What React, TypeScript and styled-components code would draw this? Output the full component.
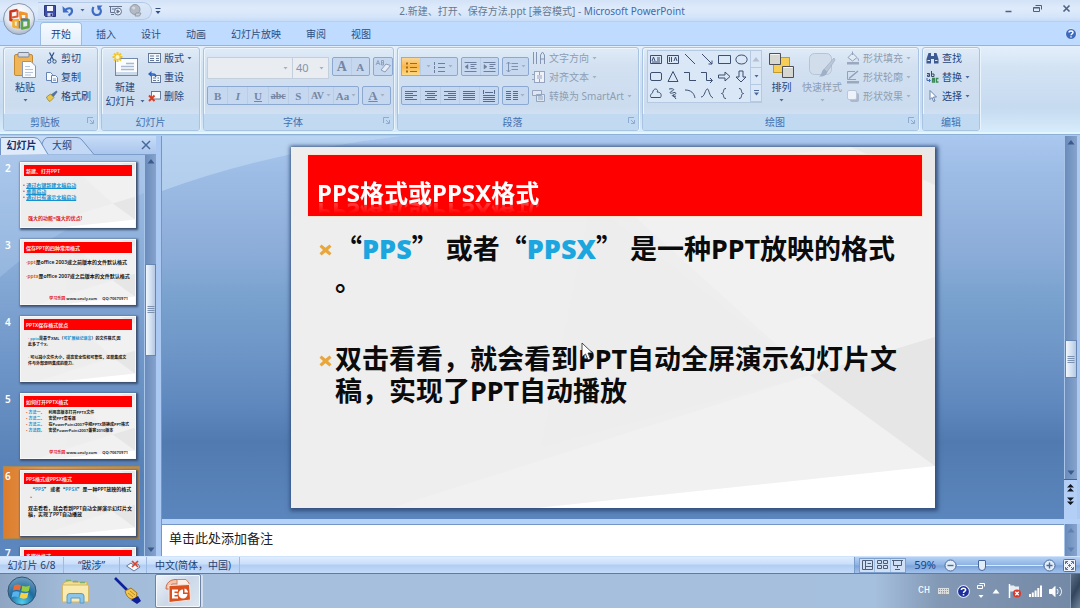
import React from 'react';
import styled, { createGlobalStyle, css } from 'styled-components';

const UI = '"Noto Sans", "Noto Sans CJK SC", sans-serif';

const Global = createGlobalStyle`
  *, *::before, *::after { box-sizing: border-box; }
  html, body { margin: 0; padding: 0; height: 100%; }
  #root { height: 100%; }
  body { font-family: ${UI}; font-size: 10px; line-height: 14px; color: #24406f; overflow: hidden; }
  button, select, textarea, input { font: inherit; color: inherit; margin: 0; padding: 0; border: 0; background: none; }
  svg { display: block; flex: none; }
  ul, ol, p, h1, h2 { margin: 0; padding: 0; list-style: none; font: inherit; }
`;

/* ---------- shell ---------- */
const Shell = styled.div`
  position: relative; display: flex; flex-direction: column; height: 100vh; background: #bfdbff;
`;

const TitleBar = styled.header`
  display: grid; grid-template-columns: 1fr auto 1fr; align-items: center; height: 22px; flex: none; padding-left: 4px;
  background: linear-gradient(#d3e2f7, #dfebfb 40%, #d5e5fa 80%, #c7dcf8); border-bottom: 1px solid #b7d0f0;
`;
const QuickArea = styled.div`
  display: flex; align-items: center; padding-left: 34px;
`;
const QuickBar = styled.div`
  display: flex; align-items: center; gap: 6px; height: 18px; width: 114px; padding-left: 6px;
  border: 1px solid #b4c9e6; border-left: 0; border-radius: 0 9px 9px 0; background: linear-gradient(#dbe8f9, #cfdff4);
`;
const IconButton = styled.button`
  display: flex; align-items: center; justify-content: center; flex: none;
`;
const TitleText = styled.h1`
  text-align: center; font-size: 10px; color: #67788f; white-space: nowrap;
  span { color: #3c6cb0; }
`;
const WindowButtons = styled.div`
  display: flex; justify-content: flex-end; gap: 20px; padding-right: 9px; align-items: center; padding-bottom: 4px;
`;
const OfficeButton = styled.button`
  position: absolute; left: 2px; top: 2px; width: 34px; height: 34px; z-index: 2;
`;

const TabRow = styled.nav`
  display: flex; align-items: flex-end; gap: 5px; height: 23px; flex: none; padding: 0 3px 0 41px; background: #bfdbff;
`;
const Tab = styled.button<{ $active?: boolean }>`
  height: 22px; padding: 0 10px; border-radius: 3px 3px 0 0; white-space: nowrap; color: #2c4d80;
  ${p => p.$active && css`
    background: linear-gradient(#f6fafe, #e3eefb); box-shadow: 0 0 0 1px #9cbce2; color: #1f3f78;
  `}
`;
const HelpButton = styled(IconButton)`
  margin-left: auto; height: 22px;
`;

const Ribbon = styled.div`
  display: flex; align-items: stretch; gap: 3px; flex: none; height: 90px; padding: 1px 3px 3px; position: relative; z-index: 1;
  background: linear-gradient(#e4effb, #d3e3f4 25%, #c6daf0 70%, #d8edfc); 
  border-top: 1px solid #92b4dd; border-bottom: 1px solid #8fb0d6; box-shadow: inset 0 -2px 0 #e2f6fd;
`;
const GroupBox = styled.section<{ $w: number }>`
  display: flex; flex-direction: column; flex: none; width: ${p => p.$w}px; 
  border: 1px solid #a9c3e2; border-radius: 3px; box-shadow: inset 1px 1px 0 #eef6fd, 1px 0 0 #eaf4fd;
  background: linear-gradient(#e0ebf7, #d3e1f1 20%, #cbdcef 70%, #dbe9f6); overflow: hidden;
`;
const GroupBody = styled.div`
  display: flex; flex: 1; padding: 1px 3px 0; gap: 3px;
`;
const GroupLabel = styled.h2`
  display: flex; align-items: center; height: 16px; background: #c1d9f1; color: #4170b0;
  span { flex: 1; text-align: center; }
`;
const Big = styled.button<{ $w: number; $off?: boolean }>`
  display: flex; flex-direction: column; align-items: center; justify-content: flex-start; width: ${p => p.$w}px; flex: none; padding-top: 2px;
  color: ${p => (p.$off ? '#8d9db3' : '#24457d')};
  span { line-height: 14px; white-space: nowrap; display: flex; align-items: center; gap: 4px; }
  > svg:first-child { margin-bottom: 1px; }
  > svg:last-child { margin-top: 5px; }
`;
const Stack = styled.div`
  display: flex; flex-direction: column; gap: 1px; flex: none;
`;
const Small = styled.button<{ $off?: boolean }>`
  display: flex; align-items: center; gap: 3px; height: 18px; white-space: nowrap;
  color: ${p => (p.$off ? '#8d9db3' : '#24457d')};
`;
const Rows = styled.div`
  display: flex; flex-direction: column; gap: 10px; padding-top: 8px; flex: none;
`;
const Line = styled.div`
  display: flex; gap: 3px; height: 19px;
`;
const Cluster = styled.div<{ $w: number }>`
  display: flex; width: ${p => p.$w}px; border: 1px solid #8ba8d0; border-radius: 2px; background: #c6d8ef;
`;
const Tool = styled.button<{ $on?: boolean; $grow?: number }>`
  display: flex; align-items: center; justify-content: center; gap: 2px; flex: ${p => p.$grow ?? 1} 1 0; min-width: 0; color: #7586a4; 
  & + & { border-left: 1px solid #b9cde7; }
  ${p => p.$on && css`background: linear-gradient(#fcd596, #f9b64a 50%, #fdd987); box-shadow: 0 0 0 1px #d6a254;`}
`;
const Letter = styled.span<{ $size?: number }>`
  font-family: "Liberation Serif", serif; font-size: ${p => p.$size ?? 11}px; line-height: 14px; font-weight: 700;
`;
const Combo = styled.label<{ $w: number }>`
  display: flex; align-items: center; width: ${p => p.$w}px; height: 22px; padding-right: 4px;
  border: 1px solid #c3cfdd; background: #e9edf2; color: #8494ab;
  select { appearance: none; flex: 1; min-width: 0; padding-left: 3px; font-size: 11px; outline: 0; }
  & + & { margin-left: -4px; }
`;
const Gallery = styled.div`
  display: flex; height: 53px; border: 1px solid #b5c9e3; background: #dae7f6; margin: 1px 0 0 1px;
`;
const Shapes = styled.div`
  display: grid; grid-template-columns: repeat(6, 17px); grid-auto-rows: 17px;
`;
const GalleryScroll = styled.div`
  display: flex; flex-direction: column; width: 11px; border-left: 1px solid #b5c9e3;
  button { flex: 1; display: flex; align-items: center; justify-content: center; width: 100%; border-bottom: 1px solid #b5c9e3; }
`;

/* ---------- workspace ---------- */
const Workspace = styled.div`
  display: flex; flex: 1; min-height: 0; background: #abc9f3; padding-top: 1px;
`;
const SidePane = styled.aside`
  display: flex; flex-direction: column; width: 156px; flex: none; min-height: 0;
`;
const PaneTabs = styled.div`
  position: relative; display: flex; align-items: center; height: 19px; flex: none; padding-right: 5px;
  background: linear-gradient(#c7dcf7, #aac6ec); border-bottom: 1px solid #7d9ecb;
`;
const PaneTab = styled.button<{ $active?: boolean }>`
  height: 18px; width: ${p => (p.$active ? 43 : 38)}px; color: #27487f; z-index: 1; white-space: nowrap;
  ${p => p.$active && css`color: #14306a; font-weight: 700;`}
`;
const TabEdges = styled.svg`
  position: absolute; left: 0; top: 0;
`;
const PaneClose = styled(IconButton)`margin-left: auto;`;
const PaneBody = styled.div`
  display: flex; flex: 1; min-height: 0;
`;
const ThumbList = styled.ol`
  position: relative; flex: 1; overflow: hidden; padding-top: 3px;
  background: linear-gradient(#a2c0e7, #8baed9 25%, #7097c9 50%, #5680b6 80%, #5c87bf);
`;
const Swoosh = styled.svg`position: absolute; left: 0; top: 0;`;
const ThumbItem = styled.li<{ $on?: boolean }>`
  position: relative; display: flex; height: 73px; margin: 0 4px 4px 3px; padding: 3px 0 0 1px; border: 1px solid transparent;
  ${p => p.$on && css`background: linear-gradient(90deg, #dc7c2c, #e69a53 30%, #bd8a4b); border-color: #a98852;`}
`;
const ThumbNumber = styled.span`
  width: 15px; text-align: left; color: #fff; font-size: 10px; line-height: 12px; font-weight: 600;
`;
const ThumbSlide = styled.button`
  position: relative; display: flex; flex-direction: column; align-items: stretch; justify-content: flex-start;
  width: 116px; height: 66px; text-align: left; background: #eee; overflow: hidden;
  border: 1px solid #f8f8f8; box-shadow: 1px 1px 2px 1px #3b4f6e; color: #111; font-size: 5px; line-height: 6px; font-weight: 600;
`;
const Facets = styled.svg`position: absolute; inset: 0; width: 100%; height: 100%;`;
const ThumbTitle = styled.span`
  position: relative; flex: none; height: 11px; margin: 2px 3px 0 3px; padding: 2px 2px 0; background: #f00; color: #ffe9e9; 
  font-size: 5px; line-height: 8px; white-space: nowrap;
`;
const ThumbText = styled.span<{ $top: number; $size?: number; $indent?: number }>`
  position: relative; margin: ${p => p.$top}px 0 0 ${p => p.$indent ?? 5}px; white-space: nowrap; font-size: ${p => p.$size ?? 5}px;
  line-height: 6px;
  i { font-style: normal; color: #d9531e; } b { font-weight: inherit; color: #1591cf; } em { font-style: normal; color: #e01414; }
`;
const ThumbFoot = styled.span`
  position: absolute; right: 7px; bottom: 2px; font-size: 4px; line-height: 6px; white-space: pre;
  em { font-style: normal; color: #e01414; }
`;
const Scroll = styled.div<{ $w: number; $fill?: boolean }>`
  display: flex; flex-direction: column; align-items: center; width: ${p => p.$w}px; flex: ${p => (p.$fill ? '1' : 'none')};
  background: linear-gradient(90deg, #6a8bbb, #86a3cb); border-left: 1px solid #a9c5ea; padding: 4px 0;
`;
const ScrollThumb = styled.div<{ $h: number }>`
  width: 100%; flex: 0 0 ${p => p.$h}px; border: 1px solid #6585b3; background: linear-gradient(90deg, #f0f6fc, #d4e1f1 50%, #b5c9e2);
  display: flex; align-items: center; justify-content: center;
`;
const Spring = styled.div<{ $n: number }>`flex: ${p => p.$n} 1 0;`;

const Main = styled.main`
  display: flex; flex-direction: column; flex: 1; min-width: 0; margin-left: 5px; border-left: 1px solid #7496c4;
`;
const StageRow = styled.div`
  display: flex; flex: 1; min-height: 0;
`;
const Stage = styled.div`
  position: relative; flex: 1; display: flex; align-items: center; justify-content: center; min-width: 0;
  background: linear-gradient(#a9c7ef, #9dbce5 10%, #8dadd9 30%, #7ba3cf 41%, #6c94c6 58%, #5f88be 70%, #517bb0 80%, #5b86bd 100%);
`;
const Slide = styled.article`
  position: relative; width: 644px; max-width: 100%; height: 361px; background: #eee; box-shadow: 1px 1px 4px 2px #33507d;
  padding: 8px 13px 0 17px; font-weight: 700; color: #0b0b0b;
`;
const SlideTitle = styled.h1`
  position: relative; display: flex; align-items: flex-end; height: 61px; padding: 0 9px 8px; background: #f00; color: #fff;
  box-shadow: 0 0 0 1px #fbe3cd; font-weight: 700; font-size: 24px; line-height: 30px; white-space: nowrap;
  span { -webkit-box-reflect: below -11px linear-gradient(transparent 45%, rgba(255, 255, 255, 0.4)); }
`;
const Points = styled.ul`
  position: relative; display: flex; flex-direction: column; gap: 46px; padding: 16px 0 0 11px; font-size: 27px; line-height: 32px;
  li { display: grid; grid-template-columns: 16px 1fr; white-space: nowrap; font-weight: 700; }
  svg { margin-top: 12px; }
  b { color: #1ba6df; }
`;
const Quote = styled.span`font-family: "Noto Sans CJK SC", sans-serif;`;
const Pointer = styled.svg`position: absolute; left: 45%; top: 54%;`;

const RightScroll = styled.div`
  display: flex; flex-direction: column; width: 16px; padding-right: 3px; background: #abc9f3;
`;
const PageButtons = styled.div`
  display: flex; flex-direction: column; align-items: center; justify-content: flex-start; gap: 5px; height: 40px; padding-top: 4px;
  border-top: 1px solid #47658f; background: #b3cff5;
`;
const NotesRow = styled.div`
  display: flex; height: 37px; flex: none; border-top: 5px solid #b4d1f8; padding-right: 3px; 
`;
const Notes = styled.textarea`
  flex: 1; resize: none; background: #fff; border-top: 1px solid #7496c4; padding: 4px 7px; color: #222; font-size: 13px; line-height: 18px; outline: 0; overflow: hidden;
`;

/* ---------- status bar ---------- */
const StatusBar = styled.footer`
  display: flex; align-items: stretch; height: 18px; flex: none; color: #24406f;
  background: linear-gradient(#e0edfd, #c9def9 45%, #b0cdf3 50%, #c4dbf8); border-top: 1px solid #cfe3fc; border-bottom: 1px solid #567db1;
`;
const StatusCell = styled.div<{ $w: number }>`
  display: flex; align-items: center; justify-content: center; width: ${p => p.$w}px; white-space: nowrap; 
  border-right: 1px solid #9dbbe2;
`;
const ZoomArea = styled.div`
  display: flex; align-items: center; margin-left: auto; padding: 0 4px; gap: 7px; border-left: 1px solid #7a9dcc;
  background: linear-gradient(#b6d1f5, #8db2e3 50%, #7ca4da 55%, #a2c2ec);
`;
const Views = styled.div`
  display: flex; width: 47px; height: 15px; border: 1px solid #7d9fce; background: #cfe0f6;
  button { flex: 1; display: flex; align-items: center; justify-content: center; }
  button + button { border-left: 1px solid #9fbce2; }
`;
const ZoomLabel = styled.output`width: 24px; text-align: center; font-size: 11px; color: #1d4487;`;
const ZoomRange = styled.input`
  appearance: none; width: 86px; height: 14px; background: linear-gradient(#dceafb, #dceafb) center / 100% 1px no-repeat; outline: 0;
  &&& { margin: 0 -7px; }
  &::-webkit-slider-thumb {
    appearance: none; width: 8px; height: 11px; border: 1px solid #44669a; border-radius: 1px 1px 4px 4px; background: #e3edf9;
  }
`;

/* ---------- taskbar ---------- */
const Taskbar = styled.div`
  display: flex; align-items: stretch; height: 34px; flex: none; padding-left: 7px;
  background: linear-gradient(90deg, #8ea6c4, #a0bad8 6%, #a5bfdc 22%, #a5c0de 81%, #8298b4 87%, #7388a5);
`;
const TaskButton = styled.button<{ $active?: boolean; $w: number }>`
  display: flex; align-items: center; justify-content: center; width: ${p => p.$w}px; 
  ${p => p.$active && css`
    margin-left: 12px;
    border: 1px solid #6d83a3; border-radius: 2px; background: linear-gradient(135deg, #f0f4fa, #ccd8e8 50%, #dde7f2); box-shadow: inset 0 0 0 1px #f4f8fc, 3px 0 0 -1px #d2deed;
  `}
`;
const Tray = styled.div`
  display: flex; align-items: center; margin-left: auto; gap: 7px; color: #fff;
  span { font-family: "Liberation Mono", monospace; font-size: 10px; }
`;
const ShowDesktop = styled.button`
  width: 10px; height: 34px; background: linear-gradient(120deg, #5c7089, #32455c 50%, #71859f); border-left: 1px solid #8fa2bc;
`;

/* ---------- drawings ---------- */
const Caret = ({ c = '#4b6a9b' }: { c?: string }) => (
  <svg width="5" height="3" viewBox="0 0 5 3"><path d="M0.5 0H4.5L2.5 2.5Z" fill={c} /></svg>
);
const dim = '#a3b1c5';
const Launcher = () => (
  <svg width="11" height="16" viewBox="0 0 11 16" fill="none" stroke="#8fabd1">
    <path d="M1.5 9V3.5H7M4 6L7 9M7.5 6V9.5H4" />
  </svg>
);

const OfficeLogo = () => (
  <svg width="34" height="34" viewBox="0 0 34 34">
    <defs>
      <radialGradient id="orb" cx=".5" cy=".3" r=".75"><stop offset="0" stopColor="#fff" /><stop offset=".6" stopColor="#e4e9f0" /><stop offset="1" stopColor="#9babc2" /></radialGradient>
    </defs>
    <circle cx="17" cy="17" r="15.5" fill="url(#orb)" stroke="#8497b3" />
    <g fill="none" strokeWidth="2.6" strokeLinejoin="round">
      <path d="M15.500 8L8.500 9.500V18L11 18.500" stroke="#c9351c" />
      <path d="M15.500 8V14.500L10 15.500" stroke="#e0582f" strokeWidth="2" />
      <path d="M18 10.500L24.500 12V17L19 17.500Z" stroke="#f0962c" />
      <path d="M11.500 18.500V24.500L16 25.500V18Z" stroke="#f2ae30" />
      <path d="M20 18.500L26.500 18V25L20 26.500Z" stroke="#5fa443" />
      <path d="M19 17.500H26" stroke="#3f78cb" strokeWidth="2" />
      <path d="M17.500 19V26.500" stroke="#4d7fd0" strokeWidth="1.500" />
    </g>
  </svg>
);
const SaveIcon = () => (
  <svg width="12" height="12" viewBox="0 0 12 12">
    <path d="M0.500 0.500H11.500V11.500H1.500L0.500 10.500Z" fill="#3f4fa8" stroke="#2a377f" /><rect x="3" y="1" width="6" height="5" fill="#f2f5fb" /><rect x="3.500" y="8" width="5" height="3.500" fill="#cfd6e6" /><rect x="6.500" y="8.500" width="1.500" height="2.500" fill="#2a377f" />
  </svg>
);
const UndoIcon = () => (
  <svg width="12" height="12" viewBox="0 0 12 12" fill="none" stroke="#3e6cc4" strokeWidth="2.200"><path d="M3 5C6 2.500 10 2.500 10 6C10 8.500 8 9.500 6.500 10.500" /><path d="M0.500 1L1 7.500H7Z" fill="#3e6cc4" stroke="none" /></svg>
);
const RedoIcon = () => (
  <svg width="12" height="12" viewBox="0 0 12 12" fill="none" stroke="#3e6cc4" strokeWidth="2.200"><path d="M2.500 2C0.500 5.500 2 10 6 10C10 10 11.200 5 8 2.800" /><path d="M6 0.500H11.500L7 5.500Z" fill="#3e6cc4" stroke="none" /></svg>
);
const ShowIcon = () => (
  <svg width="14" height="12" viewBox="0 0 14 12" fill="none" stroke="#64748f"><path d="M0 1.500H13M1.500 1.500V7.500H6M5 9.500H2M3 4H7" /><circle cx="9" cy="6.500" r="3.500" fill="#e6edf6" /><path d="M8 5L10.500 6.500L8 8Z" fill="#64748f" /></svg>
);
const GlobeIcon = () => (
  <svg width="14" height="13" viewBox="0 0 14 13"><circle cx="6" cy="5.500" r="5" fill="#b3bac4" stroke="#949ca8" /><path d="M3 3C5 1.500 7 3 6 5C4 6 3 5 3 3Z" fill="#d5dae1" /><path d="M7 9H12L10.500 12H6Z" fill="#c8ced8" stroke="#949ca8" /></svg>
);
const HelpIcon = ({ s = 12, c = '#3b6bc0' }: { s?: number; c?: string }) => (
  <svg width={s} height={s} viewBox="0 0 12 12"><circle cx="6" cy="6" r="5.500" fill={c} stroke="#dfe8f6" /><path d="M4 4.600C4 2.400 8 2.400 8 4.600C8 6 6 5.800 6 7.300M6 8.300V9.600" fill="none" stroke="#fff" strokeWidth="1.400" /></svg>
);
const PasteIcon = () => (
  <svg width="24" height="28" viewBox="0 0 24 28">
    <rect x="1.500" y="3.500" width="18" height="21" rx="1.500" fill="#f0b556" stroke="#c48a33" /><rect x="5" y="1.500" width="11" height="4.500" rx="1" fill="#d7dce4" stroke="#7d8694" />
    <path d="M9.500 10.500H18L22.500 15V26.500H9.500Z" fill="#fbfcfe" stroke="#8696b4" /><path d="M12 15.500H17M12 18.500H20M12 21.500H20M12 24H18" stroke="#b6c2d6" />
  </svg>
);
const CutIcon = () => (
  <svg width="12" height="12" viewBox="0 0 12 12" fill="none" stroke="#35568f"><path d="M3.500 0.500L7.500 8M8 0.500L4 8" strokeWidth="1.300" /><circle cx="3.200" cy="9.500" r="1.700" /><circle cx="8.500" cy="9.500" r="1.700" /></svg>
);
const CopyIcon = () => (
  <svg width="12" height="12" viewBox="0 0 12 12" fill="#f6f9fd" stroke="#6483b4"><path d="M0.500 1.500H4.500L6.500 3.500V9.500H0.500Z" /><path d="M5.500 4.500H9.500L11.500 6.500V11.500H5.500Z" /><path d="M7 8H10M7 9.500H10" stroke="#8ba4cc" /></svg>
);
const BrushIcon = () => (
  <svg width="12" height="12" viewBox="0 0 12 12"><path d="M0.500 7L4.500 4L8 7.500L4 11.500C2.500 11 1 9 0.500 7Z" fill="#e9c64e" stroke="#8d7a2d" strokeWidth=".7" /><path d="M5 4.500L10.500 0.500L11.500 2L7.500 7Z" fill="#56739f" /></svg>
);
const NewSlideIcon = () => (
  <svg width="28" height="28" viewBox="0 0 28 28">
    <rect x="4.500" y="7.500" width="22" height="17" fill="#fafcfe" stroke="#7188ac" /><rect x="5" y="21" width="21" height="3" fill="#cbd8ea" /><path d="M15 12.500H23M10 15.500H23M10 18.500H23" stroke="#a9b9d2" strokeWidth="1.400" />
    <path d="M6.500 1V11M1.500 6H11.500M3 2.500L10 9.500M10 2.500L3 9.500" stroke="#f3c62e" strokeWidth="2" /><circle cx="6.500" cy="6" r="2" fill="#fff6c2" />
  </svg>
);
const LayoutIcon = () => (
  <svg width="13" height="12" viewBox="0 0 13 12" fill="#f2f6fb" stroke="#64789a"><rect x="0.500" y="1.500" width="12" height="9" /><path d="M2 4H6M2 6.500H6M2 8.500H6M8 4H11M8 6.500H11M8 8.500H11" /></svg>
);
const ResetIcon = () => (
  <svg width="13" height="12" viewBox="0 0 13 12" fill="#f2f6fb" stroke="#64789a"><rect x="3.500" y="4.500" width="9" height="7" /><path d="M5 7H8M5 9.500H8M9.500 7H11M9.500 9.500H11" /><path d="M1 3H5C7 3 8 4 7.500 6" fill="none" stroke="#2f62c0" strokeWidth="1.500" /><path d="M0 3L3.500 0V6Z" fill="#2f62c0" stroke="none" /></svg>
);
const DeleteIcon = () => (
  <svg width="13" height="12" viewBox="0 0 13 12"><rect x="3.500" y="1.500" width="9" height="7.500" fill="#f7f9fc" stroke="#64789a" /><path d="M1 5.500L6.500 11M6.500 5.500L1 11" stroke="#dc3a22" strokeWidth="1.900" /></svg>
);
const EraserIcon = () => (
  <svg width="17" height="15" viewBox="0 0 17 15" fill="none" stroke="#8a9bb8"><path d="M1 6L3 1.500L5 6M2 4.500H4M6.500 1.500V6H8.500V1.500ZM6.500 3.800H8.500" strokeWidth=".9" /><path d="M6 11L11 5L15.500 6.500L10 13Z" fill="#e8edf5" /></svg>
);
const ListIcon = ({ c = '#6d7f9e', n }: { c?: string; n?: boolean }) => (
  <svg width="13" height="12" viewBox="0 0 13 12" stroke={c}><path d="M5 2.500H12M5 6.500H12M5 10.500H12" /><path d={n ? 'M1.500 1V4M1.500 5V8M1.500 9V12' : 'M1 2.500H3M1 6.500H3M1 10.500H3'} strokeWidth={n ? 1 : 2} /></svg>
);
const IndentIcon = ({ flip }: { flip?: boolean }) => (
  <svg width="13" height="12" viewBox="0 0 13 12" stroke="#6d7f9e" fill="#6d7f9e"><path d="M0.500 1.500H12.500M6.500 3.500H12.500M6.500 5.500H10.500M6.500 7.500H12.500M0.500 10.500H12.500" /><path d={flip ? 'M1 3.500V8L4 5.800Z' : 'M4 3.500V8L1 5.800Z'} strokeWidth=".5" /></svg>
);
const SpacingIcon = () => (
  <svg width="13" height="12" viewBox="0 0 13 12" stroke="#7f91ae" fill="none"><path d="M5.500 2.500H12M5.500 5.500H12M5.500 8.500H12M2.500 1V11M0.500 3L2.500 1L4.500 3M0.500 9L2.500 11L4.500 9" /></svg>
);
const AlignIcon = ({ d }: { d: string }) => (
  <svg width="12" height="12" viewBox="0 0 12 12" stroke="#566b90"><path d={d} /></svg>
);
const aligns = [
  'M0 1.500H12M0 3.500H8M0 5.500H12M0 7.500H8M0 9.500H12',
  'M0 1.500H12M2 3.500H10M0 5.500H12M2 7.500H10M0 9.500H12',
  'M0 1.500H12M4 3.500H12M0 5.500H12M4 7.500H12M0 9.500H12',
  'M0 1.500H12M0 3.500H12M0 5.500H12M0 7.500H12M0 9.500H12',
  'M0.500 0V4M11.500 0V4M2 2.500H10M0 5.500H12M0 7.500H12M0 9.500H12M0 11.500H12',
];
const TextDirIcon = () => (
  <svg width="14" height="14" viewBox="0 0 14 14" stroke="#8495b1" fill="none"><path d="M1.500 1V13M4.500 1V13M8.500 13V4L10.500 1L12.500 4V13M8.500 8H12.500" /></svg>
);
const AlignTextIcon = () => (
  <svg width="14" height="14" viewBox="0 0 14 14" stroke="#95a5bf" fill="#eef2f8"><rect x="2.500" y="1.500" width="10" height="11" /><path d="M0 4.500H2M0 9.500H2M5 6H10M5 8H10M7.500 2V5M7.500 9V12" /></svg>
);
const SmartArtIcon = () => (
  <svg width="14" height="14" viewBox="0 0 14 14" stroke="#95a5bf" fill="#dde6f1"><path d="M0.500 1.500H9.500V6.500H0.500ZM4.500 5.500H12.500V12.500H4.500Z" /><path d="M6 8H11M6 10H11" /></svg>
);
const shapePaths = [
  'M1.500 2.500H12.500V10.500H1.500ZM3 8L4.500 4L6 8M8 5H11M8 7H11M3 9H11',
  'M1.500 2.500H12.500V10.500H1.500ZM3.500 4V9M5.500 4V9M8 8L9.500 4L11 8',
  'M2 1L12 11', 'M2 1L12 11M12 7.500V11H8.500', 'M1.500 2.500H13.500V10.500H1.500Z', 'M7.500 2C15 2 15 11 7.500 11C0 11 0 2 7.500 2Z',
  'M3 2.500H11Q12.500 2.500 12.500 4V9Q12.500 10.500 11 10.500H3Q1.500 10.500 1.500 9V4Q1.500 2.500 3 2.500Z', 'M7 1.500L12 11.500H2Z',
  'M1 2.500H6.500V10.500H13', 'M1 2.500H6.500V10.500H12M10 8L12.500 10.500L10 13', 'M1.500 5H8V2L13 6.500L8 11V8H1.500Z', 'M5 1V7H2L7 12L12 7H9V1Z',
  'M2 10.500C0 7 4 7 4 4C6 0 10 3 8 5C12 5 13 8 11.500 10.500Z', 'M3 2C8 1 9 3 6 4C2 6 5 7 8 5.500C11 5 10 8 7 8C5 9 8 10 10 9M7 8L10 12', 'M2 3C8 3 11 6 12 11',
  'M1 10C5 10 5 2 7.500 2C9 2 9 9 13 11', 'M9 1.500C5 1.500 8 6 4.500 6.500C8 7 5 11.500 9 11.500', 'M5 1.500C9 1.500 6 6 9.500 6.500C6 7 9 11.500 5 11.500',
];
const ArrangeIcon = () => (
  <svg width="27" height="28" viewBox="0 0 27 28"><rect x="5.500" y="6.500" width="16" height="15" fill="#f6ce56" stroke="#c39a2c" /><path d="M1.500 2.500H12.500V13.500H1.500Z" fill="#d6d6d3" stroke="#4d4f55" /><path d="M14.500 15.500H25.500V26.500H14.500Z" fill="#d6d6d3" stroke="#4d4f55" /><path d="M2.500 3.500H11.500M15.500 16.500H24.500" stroke="#f6f6f4" /></svg>
);
const QuickStyleIcon = () => (
  <svg width="28" height="28" viewBox="0 0 28 28"><rect x="1.500" y="2.500" width="22" height="21" rx="5" fill="#d2ddeb" stroke="#b6c4d8" /><path d="M26 7L27 9L19 21L16 18.500Z" fill="#bac7d8" stroke="#9dadc4" strokeWidth=".7" /><path d="M16 18L19.500 21C18 25 15 26 11 25.500C14 24 13 20 16 18Z" fill="#9fafc5" /></svg>
);
const FillIcon = () => (
  <svg width="14" height="14" viewBox="0 0 14 14" fill="#e3eaf3" stroke="#90a1bb"><path d="M2 6.500L6.500 2L11 6.500L6.500 10Z" /><path d="M6.500 4V0.500M11.500 7C13 8.500 12.500 10 12 10" fill="none" /><rect x="1" y="11" width="12" height="2.500" fill="#9aa9c0" stroke="none" /></svg>
);
const OutlineIcon = () => (
  <svg width="14" height="14" viewBox="0 0 14 14" fill="none" stroke="#90a1bb"><path d="M9 1.500H1.500V9.500H10" /><path d="M3 8.500L12 1" strokeWidth="1.600" /><rect x="1" y="11" width="12" height="2.500" fill="#9aa9c0" stroke="none" /></svg>
);
const EffectIcon = () => (
  <svg width="14" height="14" viewBox="0 0 14 14"><rect x="4" y="4" width="9" height="9" rx="2" fill="#a9b8cd" /><rect x="1.500" y="1.500" width="9" height="9" rx="1.500" fill="#eef3f9" stroke="#bac7da" /></svg>
);
const FindIcon = () => (
  <svg width="13" height="12" viewBox="0 0 13 12" fill="#3c5a91"><path d="M2.500 1H5V4H8V1H10.500L12.500 7V11.500H8V7H5V11.500H0.500V7Z" /><path d="M1.500 8.500H4M9 8.500H11.500" stroke="#dce7f5" /></svg>
);
const ReplaceIcon = () => (
  <svg width="13" height="12" viewBox="0 0 13 12" fill="none" stroke="#3b4d6c"><path d="M1 2.500H3.500V5.500H1.500V4H3.500M5.500 0V5.500H8V3H5.500" /><path d="M6 7.500H8.500V11H6.500V9H8.500M12.500 7.500H10.500V11H12.500" stroke="#3b8a55" strokeWidth="1.300" /><path d="M1 7V9.500H4M3 8L4.500 9.500L3 11" stroke="#3d6cc0" /></svg>
);
const SelectIcon = () => (
  <svg width="13" height="12" viewBox="0 0 13 12"><path d="M4 0.500L4 9.500L6 7.500L7.500 11.500L9 11L7.500 7H10.500Z" fill="#fff" stroke="#6983ad" /></svg>
);
const Grip = () => (
  <svg width="8" height="7" viewBox="0 0 8 7" stroke="#7d91b0"><path d="M0.500 0.500H7.500M0.500 2.500H7.500M0.500 4.500H7.500M0.500 6.500H7.500" /></svg>
);
const Arrow = ({ up, c = '#3c5b8c' }: { up?: boolean; c?: string }) => (
  <svg width="8" height="5" viewBox="0 0 8 5"><path d={up ? 'M4 0L7.500 4.500H0.500Z' : 'M4 5L7.500 0.500H0.500Z'} fill={c} /></svg>
);
const DoubleArrow = ({ up }: { up?: boolean }) => (
  <svg width="7" height="8" viewBox="0 0 7 8" fill="#10151f"><path d={up ? 'M3.500 0L7 3.500H0ZM3.500 4L7 7.500H0Z' : 'M3.500 4L7 0.500H0ZM3.500 8L7 4.500H0Z'} /></svg>
);
const BulletX = () => (
  <svg width="13" height="12" viewBox="0 0 13 12"><path d="M2.500 0.500L6.500 3.800L10.500 0.500L12.500 2.800L9 6L12.500 9.200L10.500 11.500L6.500 8.200L2.500 11.500L0.500 9.200L4 6L0.500 2.800Z" fill="#e9a63a" /></svg>
);
const ZoomSign = ({ plus }: { plus?: boolean }) => (
  <svg width="13" height="13" viewBox="0 0 13 13" fill="#e3edf9" stroke="#4b6a9b"><circle cx="6.500" cy="6.500" r="5.500" /><path d={plus ? 'M3.500 6.500H9.500M6.500 3.500V9.500' : 'M3.500 6.500H9.500'} strokeWidth="1.400" /></svg>
);
const ViewIcon = ({ d }: { d: string }) => (
  <svg width="11" height="10" viewBox="0 0 11 10" fill="none" stroke="#4e5d76"><path d={d} /></svg>
);
const FitIcon = () => (
  <svg width="13" height="13" viewBox="0 0 13 13" stroke="#5a6f92" fill="#eef3fa"><rect x="0.500" y="0.500" width="12" height="12" rx="1" /><path d="M2.500 5V2.500H5M8 2.500H10.500V5M10.500 8V10.500H8M5 10.500H2.500V8M6.500 5V8M5 6.500H8M3 3L5 5M10 3L8 5M3 10L5 8M10 10L8 8" fill="none" /></svg>
);
const BookIcon = () => (
  <svg width="15" height="13" viewBox="0 0 15 13"><path d="M0.500 7L5 4L7.500 6L12 5L14 8L8 12L5 10Z" fill="#f5f8fc" stroke="#68799a" /><path d="M6 2L12 8M12 2L6 8" stroke="#d8442e" strokeWidth="1.700" /></svg>
);
const StartOrb = () => (
  <svg width="30" height="30" viewBox="0 0 30 30">
    <defs><radialGradient id="start" cx=".5" cy=".9" r=".9"><stop offset="0" stopColor="#4fd0ee" /><stop offset=".5" stopColor="#1f6b9f" /><stop offset="1" stopColor="#6f9fc0" /></radialGradient></defs>
    <circle cx="15" cy="15" r="14" fill="url(#start)" stroke="#35526f" />
    <path d="M7 9.500C9.500 8 12 8.200 14 9.300L12.800 14.500C10.500 13.500 8.300 13.700 6 14.800Z" fill="#ee6a35" />
    <path d="M15.300 9.800C18 11 20.500 10.800 23 9.500L21.800 15C19.500 16.200 16.800 16 14.300 15Z" fill="#94cc42" />
    <path d="M5.700 16.200C8 15 10.500 15 12.500 16L11.300 21.300C9 20.300 6.800 20.300 4.600 21.500Z" fill="#56b3ee" />
    <path d="M13.900 16.500C16.500 17.500 19 17.600 21.500 16.500L20.200 21.800C17.800 23 15 22.800 12.700 21.800Z" fill="#fbcf3f" />
  </svg>
);
const FolderIcon = () => (
  <svg width="29" height="27" viewBox="0 0 29 27"><path d="M2 5L9 2L12 4H26V23H2Z" fill="#f2dc8e" stroke="#cdb060" /><path d="M5 2.500H10M12 3.500H17M19 4.500H24" stroke="#7fb06a" strokeWidth="1.600" /><path d="M1.500 7H27.500V24H1.500Z" fill="#f9eab0" stroke="#d3b869" /><path d="M6 25V18Q6 15.500 9 15.500H20Q23 15.500 23 18V25H19V20H10V25Z" fill="#8cc5ea" stroke="#5a9bc8" /></svg>
);
const PaintIcon = () => (
  <svg width="30" height="28" viewBox="0 0 30 28"><path d="M2 1L15 14" stroke="#10209a" strokeWidth="2.600" /><path d="M12 14L18 11L24 16L23 22L18 22C15 21 13 18 12 14Z" fill="#f4c54c" stroke="#a2741c" /><path d="M15 16L20 20M17 14L22 18" stroke="#b98b28" /><path d="M18 23L25 19L28 24L24 27Z" fill="#0f1f96" /></svg>
);
const PptIcon = () => (
  <svg width="28" height="27" viewBox="0 0 28 27"><path d="M2 11C2 5 6 1.500 12 1.500H14V6H9Q6 6 6 11H2Z" fill="#f3c3ab" stroke="#c96e4c" /><path d="M13 1.500H22L25 5V22H13Z" fill="#fbeee7" stroke="#d08465" /><path d="M5 7.500L25.500 6.500L26.500 22L5 24.500Z" fill="#d9511f" stroke="#f7e7df" /><path d="M8 11.500H14V13.500H10.500V15H13.500V17H10.500V18.500H14V20.500H8Z" fill="#fff" /><path d="M19 11.500A4.500 4.500 0 1 0 23.500 16H19Z" fill="#fff" /><path d="M20.500 10.500V14.500H24Q23.500 11 20.500 10.500Z" fill="#fff" /></svg>
);

/* ---------- slide artwork ---------- */
const SlideFacets = () => (
  <Facets viewBox="0 0 644 361" preserveAspectRatio="none" aria-hidden>
    <path d="M644 0H560L300 30L519 228L644 190Z" fill="#f1f1f1" />
    <path d="M560 0H644V38Z" fill="#e8e8e8" />
    <path d="M300 55L519 228L250 300Z" fill="#ececec" opacity=".6" />
    <path d="M519 228L100 361H245L644 319Z" fill="#f1f1f1" />
    <path d="M519 228L644 190V319Z" fill="#e6e6e6" />
    <path d="M245 361L644 319V361Z" fill="#fff" />
  </Facets>
);

const Group = ({ w, name, launcher, children }: { w: number; name: string; launcher?: boolean; children: React.ReactNode }) => (
  <GroupBox $w={w} aria-label={name}>
    <GroupBody>{children}</GroupBody>
    <GroupLabel><span>{name}</span>{launcher && <Launcher />}</GroupLabel>
  </GroupBox>
);

const Thumb = ({ n, title, on, children }: { n: number; title: string; on?: boolean; children?: React.ReactNode }) => (
  <ThumbItem $on={on}>
    <ThumbNumber>{n}</ThumbNumber>
    <ThumbSlide aria-label={`幻灯片 ${n}`}>
      <SlideFacets />
      <ThumbTitle>{title}</ThumbTitle>
      {children}
    </ThumbSlide>
  </ThumbItem>
);
const Foot = () => <ThumbFoot><em>学习乐园</em> www.oeoly.com     QQ:70670971</ThumbFoot>;

const Tabs = ['开始', '插入', '设计', '动画', '幻灯片放映', '审阅', '视图'];

export default function App() {
  return (
    <Shell>
      <Global />
      <OfficeButton aria-label="Office"><OfficeLogo /></OfficeButton>
      <TitleBar>
        <QuickArea>
          <QuickBar>
            <IconButton aria-label="保存"><SaveIcon /></IconButton>
            <IconButton aria-label="撤消"><UndoIcon /></IconButton>
            <Caret />
            <IconButton aria-label="恢复"><RedoIcon /></IconButton>
            <IconButton aria-label="放映"><ShowIcon /></IconButton>
            <IconButton aria-label="发布"><GlobeIcon /></IconButton>
          </QuickBar>
          <IconButton aria-label="自定义快速访问工具栏">
            <svg width="12" height="8" viewBox="0 0 12 8"><path d="M3.500 1.500H8.500" stroke="#33507f" /><path d="M3.500 4H8.500L6 7Z" fill="#33507f" /></svg>
          </IconButton>
        </QuickArea>
        <TitleText>2.新建、打开、保存方法.ppt [兼容模式] - <span>Microsoft PowerPoint</span></TitleText>
        <WindowButtons>
          <IconButton aria-label="最小化"><svg width="9" height="9" viewBox="0 0 9 9"><path d="M1.500 7.500H7.500" stroke="#4d6182" strokeWidth="1.500" /></svg></IconButton>
          <IconButton aria-label="还原"><svg width="9" height="9" viewBox="0 0 9 9" fill="none" stroke="#4d6182"><path d="M2.500 1.500H8.500V5.500M0.500 3.500H6.500V7.500H0.500ZM0.500 4H6.500" /></svg></IconButton>
          <IconButton aria-label="关闭"><svg width="9" height="9" viewBox="0 0 9 9"><path d="M1.500 1.500L7.500 7.500M7.500 1.500L1.500 7.500" stroke="#4d6182" strokeWidth="1.600" /></svg></IconButton>
        </WindowButtons>
      </TitleBar>
      <TabRow>
        {Tabs.map((t, i) => <Tab key={t} $active={i === 0}>{t}</Tab>)}
        <HelpButton aria-label="帮助"><HelpIcon /></HelpButton>
      </TabRow>

      <Ribbon>
        <Group w={95} name="剪贴板" launcher>
          <Big $w={36}><PasteIcon /><span>粘贴</span><Caret /></Big>
          <Stack>
            <Small><CutIcon />剪切</Small>
            <Small><CopyIcon />复制</Small>
            <Small><BrushIcon />格式刷</Small>
          </Stack>
        </Group>
        <Group w={99} name="幻灯片">
          <Big $w={40}><NewSlideIcon /><span>新建</span><span>幻灯片 <Caret /></span></Big>
          <Stack>
            <Small><LayoutIcon />版式 <Caret /></Small>
            <Small><ResetIcon />重设</Small>
            <Small><DeleteIcon />删除</Small>
          </Stack>
        </Group>
        <Group w={191} name="字体" launcher>
          <Rows>
            <Line>
              <Combo $w={86}><select aria-label="字体"><option> </option></select><Caret c={dim} /></Combo>
              <Combo $w={37}><select aria-label="字号"><option>40</option></select><Caret c={dim} /></Combo>
              <Cluster $w={38}><Tool aria-label="增大字号"><Letter $size={14}>A</Letter></Tool><Tool aria-label="减小字号"><Letter>A</Letter></Tool></Cluster>
              <Cluster $w={20}><Tool aria-label="清除格式"><EraserIcon /></Tool></Cluster>
            </Line>
            <Line>
              <Cluster $w={152}>
                <Tool $grow={4}><Letter>B</Letter></Tool>
                <Tool $grow={4}><Letter><i>I</i></Letter></Tool>
                <Tool $grow={4}><Letter><u>U</u></Letter></Tool>
                <Tool $grow={4}><Letter $size={10}><s>abc</s></Letter></Tool>
                <Tool $grow={4}><Letter>S</Letter></Tool>
                <Tool $grow={5}><Letter $size={10}>AV</Letter><Caret c={dim} /></Tool>
                <Tool $grow={5}><Letter>Aa</Letter><Caret c={dim} /></Tool>
              </Cluster>
              <Cluster $w={29}><Tool><Letter $size={13}><u>A</u></Letter><Caret c={dim} /></Tool></Cluster>
            </Line>
          </Rows>
        </Group>
        <Group w={242} name="段落" launcher>
          <Rows>
            <Line>
              <Cluster $w={57}>
                <Tool $on $grow={1} aria-label="项目符号"><ListIcon c="#a06a1c" /></Tool>
                <Tool $grow={2} aria-label="编号"><Caret c={dim} /><ListIcon n /><Caret c={dim} /></Tool>
              </Cluster>
              <Cluster $w={38}><Tool aria-label="减少缩进"><IndentIcon /></Tool><Tool aria-label="增加缩进"><IndentIcon flip /></Tool></Cluster>
              <Cluster $w={27}><Tool aria-label="行距"><SpacingIcon /><Caret c={dim} /></Tool></Cluster>
            </Line>
            <Line>
              <Cluster $w={98}>{aligns.map(d => <Tool key={d} aria-label="对齐"><AlignIcon d={d} /></Tool>)}</Cluster>
              <Cluster $w={27}><Tool aria-label="分栏"><AlignIcon d="M0 1.500H5M0 3.500H5M0 5.500H5M0 7.500H5M0 9.500H5M7 1.500H12M7 3.500H12M7 5.500H12M7 7.500H12M7 9.500H12" /><Caret c={dim} /></Tool></Cluster>
            </Line>
          </Rows>
          <Stack>
            <Small $off><TextDirIcon />文字方向 <Caret c={dim} /></Small>
            <Small $off><AlignTextIcon />对齐文本 <Caret c={dim} /></Small>
            <Small $off><SmartArtIcon />转换为 SmartArt <Caret c={dim} /></Small>
          </Stack>
        </Group>
        <Group w={277} name="绘图" launcher>
          <Gallery>
            <Shapes>
              {shapePaths.map(d => (
                <IconButton key={d} aria-label="形状"><svg width="15" height="13" viewBox="0 0 15 13" fill="none" stroke="#3c4f70"><path d={d} /></svg></IconButton>
              ))}
            </Shapes>
            <GalleryScroll>
              <button aria-label="上一行"><Arrow up c="#b3c0d3" /></button>
              <button aria-label="下一行"><Caret /></button>
              <button aria-label="更多"><svg width="7" height="6" viewBox="0 0 7 6"><path d="M1 0.500H6" stroke="#4b6a9b" /><path d="M1 2.500H6L3.500 5.500Z" fill="#4b6a9b" /></svg></button>
            </GalleryScroll>
          </Gallery>
          <Big $w={33}><ArrangeIcon /><span>排列</span><Caret /></Big>
          <Big $w={42} $off><QuickStyleIcon /><span>快速样式</span><Caret c={dim} /></Big>
          <Stack>
            <Small $off><FillIcon />形状填充 <Caret c={dim} /></Small>
            <Small $off><OutlineIcon />形状轮廓 <Caret c={dim} /></Small>
            <Small $off><EffectIcon />形状效果 <Caret c={dim} /></Small>
          </Stack>
        </Group>
        <Group w={58} name="编辑">
          <Stack>
            <Small><FindIcon />查找</Small>
            <Small><ReplaceIcon />替换 <Caret /></Small>
            <Small><SelectIcon />选择 <Caret /></Small>
          </Stack>
        </Group>
      </Ribbon>

      <Workspace>
        <SidePane>
          <PaneTabs>
            <TabEdges width="110" height="19" viewBox="0 0 110 19" fill="none" stroke="#7092c4">
              <path d="M46 18.500L42 8Q44 1.500 48 1.500H77Q80 1.500 82 4L94 18.500" fill="#c2d8f5" />
              <path d="M0.500 19V2.500Q0.500 1.500 2 1.500H34Q38 1.500 40 5L48 18.500" fill="#dfebfb" />
            </TabEdges>
            <PaneTab $active>幻灯片</PaneTab>
            <PaneTab>大纲</PaneTab>
            <PaneClose aria-label="关闭窗格"><svg width="10" height="10" viewBox="0 0 10 10"><path d="M1 1L9 9M9 1L1 9" stroke="#49699c" strokeWidth="1.500" /></svg></PaneClose>
          </PaneTabs>
          <PaneBody>
            <ThumbList>
              <Swoosh width="144" height="125" viewBox="0 0 144 125" aria-hidden><path d="M0 0H144V38Q60 70 0 122Z" fill="#c3dcf6" opacity=".25" /></Swoosh>
              <Thumb n={2} title="新建、打开PPT">
                <ThumbText $top={6} $indent={2}>
                  <i>• </i><b><u>通过右键新建文稿启动</u></b><br /><i>• </i><b><u>桌面启动</u></b><br /><i>• </i><b><u>通过已有演示文稿启动</u></b>
                </ThumbText>
                <ThumbText $top={15} $indent={7}><em>强大的功能=强大的优点!</em></ThumbText>
              </Thumb>
              <Thumb n={3} title="保存PPT的四种常用格式">
                <ThumbText $top={6}><i>·ppt</i>是office 2003或之前版本的文件默认格式</ThumbText>
                <ThumbText $top={8}><i>·pptx</i>是office 2007或之后版本的文件默认格式</ThumbText>
                <Foot />
              </Thumb>
              <Thumb n={4} title="PPTX保存格式优点">
                <ThumbText $top={6} $size={4} $indent={7}><i>· </i><b>pptx</b>是基于XML（<b>可扩展标记语言</b>）的文件格式,因<br />此多了个X。</ThumbText>
                <ThumbText $top={7} $size={4} $indent={7}><i>· </i>可以减小文件大小，提高安全性和可靠性，还能集成文<br />件与外部源码集成的能力。</ThumbText>
              </Thumb>
              <Thumb n={5} title="如何打开PPTX格式">
                <ThumbText $top={3} $size={4}>
                  <i>• </i><b>方法一、</b>　利用高版本打开PPTX文件<br /><i>• </i><b>方法二、</b>　安装PPT查看器<br />
                  <i>• </i><b>方法三、</b>　在PowerPoint2007中把PPTX转换成PPT格式<br /><i>• </i><b>方法四、</b>　安装PowerPoint2007兼容2010版本
                </ThumbText>
                <Foot />
              </Thumb>
              <Thumb n={6} title="PPS格式或PPSX格式" on>
                <ThumbText $top={2} $indent={9}><Quote>“</Quote><b>PPS</b><Quote>”</Quote> 或者<Quote>“</Quote><b>PPSX</b><Quote>”</Quote>是一种PPT放映的格式<br />。</ThumbText>
                <ThumbText $top={7} $indent={7}>双击看看，就会看到PPT自动全屏演示幻灯片文<br />稿，实现了PPT自动播放</ThumbText>
              </Thumb>
              <Thumb n={7} title="多媒体格式" />
            </ThumbList>
            <Scroll $w={12}>
              <Arrow up />
              <Spring $n={100} /><ScrollThumb $h={92}><Grip /></ScrollThumb><Spring $n={192} />
              <Arrow />
            </Scroll>
          </PaneBody>
        </SidePane>

        <Main>
          <StageRow>
            <Stage>
              <Swoosh width="250" height="60" viewBox="0 0 250 60" aria-hidden><path d="M0 0H240Q110 15 0 55Z" fill="#c3dcf3" opacity=".6" /></Swoosh>
              <Slide>
                <SlideFacets />
                <SlideTitle><span>PPS格式或PPSX格式</span></SlideTitle>
                <Points>
                  <li><BulletX /><p><Quote>“</Quote><b>PPS</b><Quote>”</Quote> 或者<Quote>“</Quote><b>PPSX</b><Quote>”</Quote> 是一种PPT放映的格式<br />。</p></li>
                  <li><BulletX /><p>双击看看，就会看到PPT自动全屏演示幻灯片文<br />稿，实现了PPT自动播放</p></li>
                </Points>
                <Pointer width="12" height="20" viewBox="0 0 12 20" aria-hidden><path d="M1 1V15L4.500 12L7 18L9.500 17L7 11H11.500Z" fill="#fff" stroke="#222" strokeWidth=".8" /></Pointer>
              </Slide>
            </Stage>
            <RightScroll>
              <Scroll $w={13} $fill>
                <Arrow up />
                <Spring $n={194} /><ScrollThumb $h={38}><Grip /></ScrollThumb><Spring $n={91} />
                <Arrow />
              </Scroll>
              <PageButtons><DoubleArrow up /><DoubleArrow /></PageButtons>
            </RightScroll>
          </StageRow>
          <NotesRow>
            <Notes aria-label="备注" defaultValue="单击此处添加备注" />
            <Scroll $w={13}><Arrow up c="#5f80b2" /><Spring $n={1} /><Arrow c="#5f80b2" /></Scroll>
          </NotesRow>
        </Main>
      </Workspace>

      <StatusBar>
        <StatusCell $w={64}>幻灯片 6/8</StatusCell>
        <StatusCell $w={56}>“跋涉”</StatusCell>
        <StatusCell $w={27}><BookIcon /></StatusCell>
        <StatusCell $w={93}>中文(简体，中国)</StatusCell>
        <ZoomArea>
          <Views>
            <button aria-label="普通视图"><ViewIcon d="M0.500 0.500H10.500V9.500H0.500ZM3.500 0.500V9.500M3.500 6.500H10.500M5.500 3.500H9" /></button>
            <button aria-label="幻灯片浏览"><ViewIcon d="M0.500 0.500H4.500V3.500H0.500ZM6.500 0.500H10.500V3.500H6.500ZM0.500 5.500H4.500V8.500H0.500ZM6.500 5.500H10.500V8.500H6.500Z" /></button>
            <button aria-label="幻灯片放映"><ViewIcon d="M0 0.500H11M1.500 0.500V5.500H9.500V0.500M5.500 5.500V8M3 9.500H8" /></button>
          </Views>
          <ZoomLabel>59%</ZoomLabel>
          <IconButton aria-label="缩小"><ZoomSign /></IconButton>
          <ZoomRange type="range" aria-label="显示比例" min={0} max={100} defaultValue={27} />
          <IconButton aria-label="放大"><ZoomSign plus /></IconButton>
          <IconButton aria-label="适应窗口"><FitIcon /></IconButton>
        </ZoomArea>
      </StatusBar>

      <Taskbar>
        <TaskButton $w={30} aria-label="开始"><StartOrb /></TaskButton>
        <TaskButton $w={76} aria-label="资源管理器"><FolderIcon /></TaskButton>
        <TaskButton $w={30} aria-label="画图"><PaintIcon /></TaskButton>
        <TaskButton $w={46} $active aria-label="PowerPoint"><PptIcon /></TaskButton>
        <Tray>
          <span>CH</span>
          <svg width="13" height="8" viewBox="0 0 13 8"><rect x="0.500" y="0.500" width="12" height="7" fill="#d9dde0" stroke="#8e97a2" /><path d="M2 2.500H11M2 4.500H11M4 6H9" stroke="#8e97a2" strokeDasharray="1 1" /></svg>
          <HelpIcon s={13} c="#1c2f9c" />
          <svg width="8" height="16" viewBox="0 0 8 16" fill="none" stroke="#fff"><path d="M2.500 0.500H7.500V3.500M0.500 2.500H5.500V5.500H0.500Z" /><path d="M1.500 12H6.500L4 15Z" fill="#fff" stroke="none" /></svg>
          <Arrow up c="#fff" />
          <svg width="15" height="14" viewBox="0 0 15 14"><path d="M2.500 0V14" stroke="#fff" strokeWidth="1.500" /><path d="M3 1.500H7L8 2.500H12V7.500H3Z" fill="#e8edf4" /><circle cx="10" cy="9.500" r="4" fill="#d93a2b" /><path d="M8.300 7.800L11.700 11.200M11.700 7.800L8.300 11.200" stroke="#fff" strokeWidth="1.300" /></svg>
          <svg width="13" height="12" viewBox="0 0 13 12" fill="#fff"><path d="M0 9H2V12H0ZM2.800 7.500H4.800V12H2.800ZM5.600 5.500H7.600V12H5.600ZM8.300 3H10.300V12H8.300ZM11 0.500H13V12H11Z" /></svg>
          <svg width="14" height="13" viewBox="0 0 14 13" fill="none" stroke="#fff"><path d="M0.500 4.500H3L6 1.500V11.500L3 8.500H0.500Z" fill="#fff" /><path d="M8 4C9.300 5.500 9.300 7.500 8 9M10.500 2C13.200 5 13.200 8 10.500 11" /></svg>
          <ShowDesktop aria-label="显示桌面" />
        </Tray>
      </Taskbar>
    </Shell>
  );
}
